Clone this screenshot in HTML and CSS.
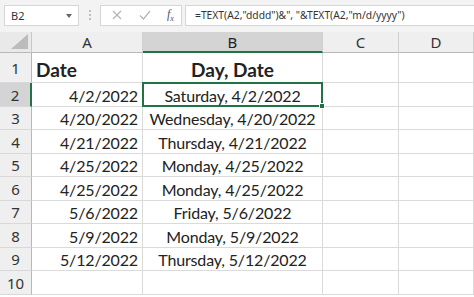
FILE: index.html
```html
<!DOCTYPE html>
<html lang="en">
 <head>
  <meta charset="utf-8" />
  <title>Day, Date</title>
  <link rel="stylesheet" href="styles.css">
 </head>
 <body>
  <div class="toolbar">
   <div class="namebox">B2<span class="drop"></span></div>
   <div class="grip"><i></i><i></i><i></i></div>
   <div class="fxbox">
    <svg class="ico" width="12" height="12" viewBox="0 0 12 12"><path d="M2 2 L10 10 M10 2 L2 10" stroke="#b4b4b4" stroke-width="1.2" fill="none"/></svg>
    <svg class="ico" width="14" height="12" viewBox="0 0 14 12"><path d="M2 6.5 L5.5 10 L12 2" stroke="#b4b4b4" stroke-width="1.2" fill="none"/></svg>
    <span class="fx">f<sub>x</sub></span>
   </div>
   <div class="formula">=TEXT(A2,"dddd")&amp;", "&amp;TEXT(A2,"m/d/yyyy")</div>
  </div>
  <div class="sheet">
   <div class="corner"><span class="tri"></span></div>
   <div class="colhead">A</div>
   <div class="colhead sel">B</div>
   <div class="colhead">C</div>
   <div class="colhead">D</div>

   <div class="rowhead tall">1</div>
   <div class="cell bold">Date</div>
   <div class="cell bold mid">Day, Date</div>
   <div class="cell"></div>
   <div class="cell"></div>

   <div class="rowhead sel">2</div>
   <div class="cell num">4/2/2022</div>
   <div class="cell mid active">Saturday, 4/2/2022<span class="handle"></span></div>
   <div class="cell"></div>
   <div class="cell"></div>

   <div class="rowhead">3</div>
   <div class="cell num">4/20/2022</div>
   <div class="cell mid">Wednesday, 4/20/2022</div>
   <div class="cell"></div>
   <div class="cell"></div>

   <div class="rowhead">4</div>
   <div class="cell num">4/21/2022</div>
   <div class="cell mid">Thursday, 4/21/2022</div>
   <div class="cell"></div>
   <div class="cell"></div>

   <div class="rowhead">5</div>
   <div class="cell num">4/25/2022</div>
   <div class="cell mid">Monday, 4/25/2022</div>
   <div class="cell"></div>
   <div class="cell"></div>

   <div class="rowhead">6</div>
   <div class="cell num">4/25/2022</div>
   <div class="cell mid">Monday, 4/25/2022</div>
   <div class="cell"></div>
   <div class="cell"></div>

   <div class="rowhead">7</div>
   <div class="cell num">5/6/2022</div>
   <div class="cell mid">Friday, 5/6/2022</div>
   <div class="cell"></div>
   <div class="cell"></div>

   <div class="rowhead">8</div>
   <div class="cell num">5/9/2022</div>
   <div class="cell mid">Monday, 5/9/2022</div>
   <div class="cell"></div>
   <div class="cell"></div>

   <div class="rowhead">9</div>
   <div class="cell num">5/12/2022</div>
   <div class="cell mid">Thursday, 5/12/2022</div>
   <div class="cell"></div>
   <div class="cell"></div>

   <div class="rowhead">10</div>
   <div class="cell"></div>
   <div class="cell"></div>
   <div class="cell"></div>
   <div class="cell"></div>
  </div>
 </body>
</html>
```

FILE: styles.css
```css
* { margin: 0; padding: 0; box-sizing: border-box; }
body {
  width: 474px;
  height: 297px;
  overflow: hidden;
  background-color: #fff;
  color: #222;
  font-family: Lato, "Noto Sans", sans-serif;
}
.toolbar {
  display: flex;
  align-items: center;
  height: 32px;
  padding: 0 0 2px 4px;
  background-color: #f3f3f3;
  font-family: "Noto Sans", sans-serif;
  font-size: 11px;
  color: #333;
}
.namebox {
  position: relative;
  width: 75px;
  height: 21px;
  padding: 2px 0 0 6px;
  background-color: #fff;
  border: 1px solid #d6d6d6;
}
.drop {
  position: absolute;
  right: 6px;
  top: 8px;
  border-left: 3px solid transparent;
  border-right: 3px solid transparent;
  border-top: 4px solid #666;
}
.grip {
  display: flex;
  flex-direction: column;
  gap: 2px;
  margin: 0 9px 0 10px;
}
.grip i {
  width: 2px;
  height: 2px;
  background-color: #c0c0c0;
}
.fxbox {
  display: flex;
  align-items: center;
  gap: 15px;
  width: 82px;
  height: 21px;
  padding-left: 10px;
  background-color: #fff;
  border: 1px solid #d6d6d6;
}
.fx {
  font-family: "Liberation Serif", serif;
  font-style: italic;
  font-size: 12px;
  color: #555;
}
.fx sub { font-size: 8px; }
.formula {
  flex: 1;
  height: 21px;
  margin-left: 3px;
  padding: 2px 0 0 9px;
  background-color: #fff;
  border: 1px solid #d6d6d6;
  border-right: none;
  white-space: nowrap;
  font-size: 10.3px;
}
.sheet {
  display: grid;
  grid-template-columns: 32px 111px 180px 76px 75px;
  grid-template-rows: 21px 30px repeat(9, 23.5px);
}
.corner {
  position: relative;
  background-color: #e9e9e9;
  border-right: 1px solid #c8c8c8;
  border-bottom: 1px solid #b8b8b8;
}
.tri {
  position: absolute;
  right: 3px;
  bottom: 3px;
  border-left: 17px solid transparent;
  border-bottom: 15px solid #bcbcbc;
}
.colhead {
  display: flex;
  align-items: center;
  justify-content: center;
  background-color: #efefef;
  border-right: 1px solid #d0d0d0;
  border-bottom: 1px solid #b8b8b8;
  font-family: "Noto Sans", sans-serif;
  font-size: 15px;
  color: #333;
}
.colhead.sel {
  background-color: #d4d4d4;
  border-bottom: 2px solid #217346;
  color: #222;
}
.rowhead {
  display: flex;
  align-items: center;
  justify-content: center;
  padding-top: 1px;
  background-color: #efefef;
  border-right: 1px solid #b8b8b8;
  border-bottom: 1px solid #d8d8d8;
  font-family: "Noto Sans", sans-serif;
  font-size: 15px;
  color: #333;
}
.rowhead.sel {
  background-color: #d4d4d4;
  border-right: 2px solid #217346;
}
.cell {
  display: flex;
  align-items: center;
  padding: 2px 4px 0;
  border-right: 1px solid #dadada;
  border-bottom: 1px solid #dadada;
  font-size: 16px;
  letter-spacing: -0.15px;
  white-space: nowrap;
}
.num { justify-content: flex-end; }
.mid { justify-content: center; }
.bold {
  font-weight: bold;
  font-size: 19px;
  letter-spacing: 0;
  padding-top: 4px;
}
.active {
  position: relative;
  border: 2px solid #217346;
  margin: -1px 0 0 -1px;
}
.handle {
  position: absolute;
  right: -4px;
  bottom: -4px;
  width: 6px;
  height: 6px;
  background-color: #217346;
  border: 1px solid #fff;
}
```
